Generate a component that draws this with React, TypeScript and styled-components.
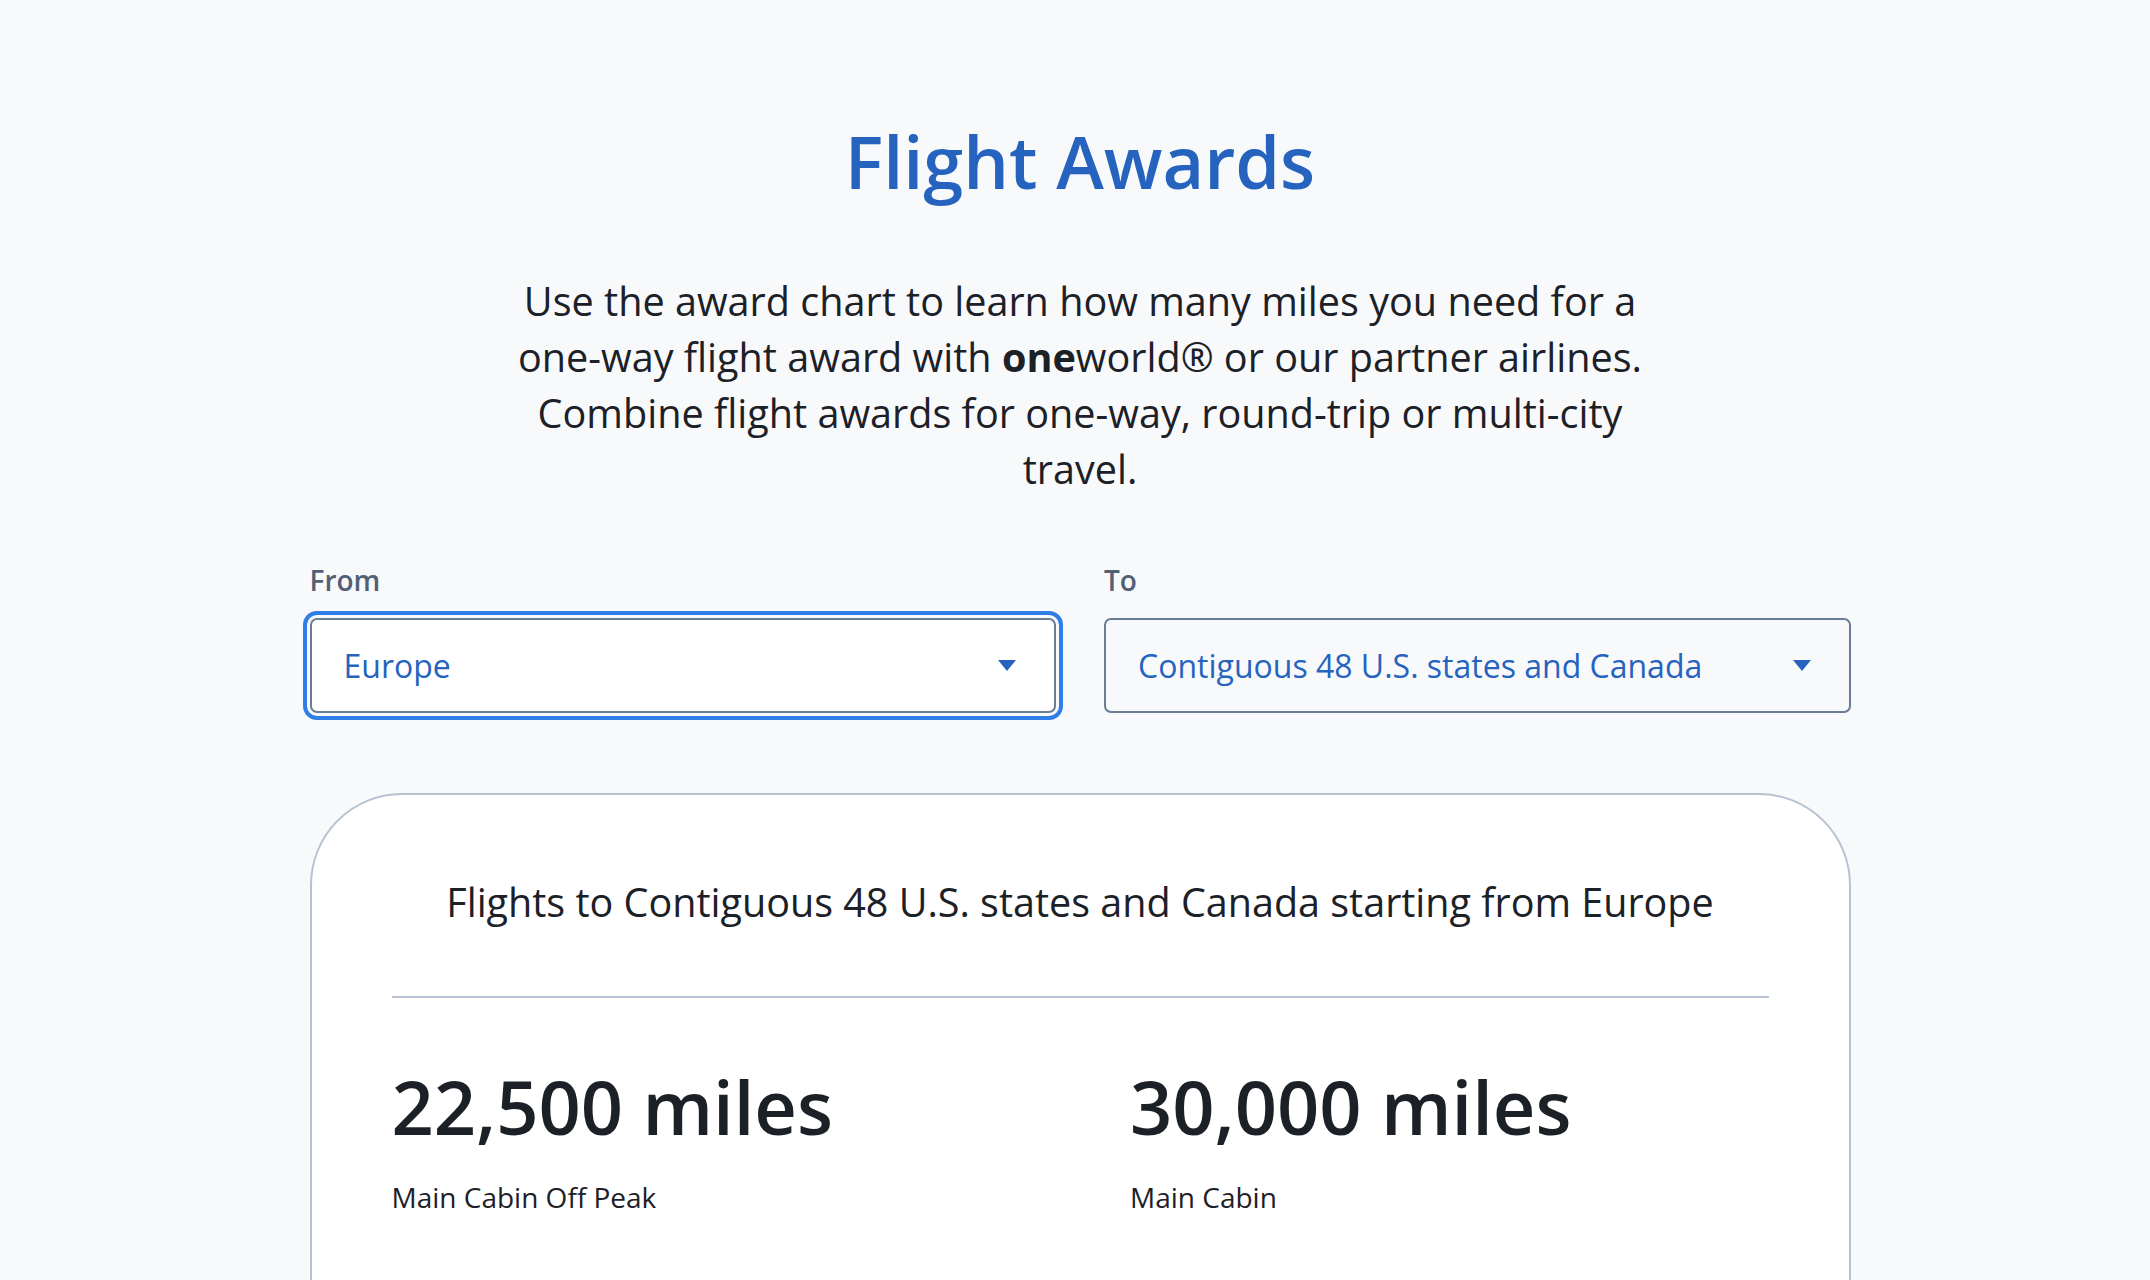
import React from 'react'
import styled, { createGlobalStyle } from 'styled-components'

const BLUE = '#2563be'
const INK = '#1c2027'
const SLATE = '#6a7c96'
const LINE = '#b6c2d1'

const GlobalStyle = createGlobalStyle`
  html, body {
    margin: 0;
    padding: 0;
    background: #f8f9fb;
  }
  body {
    font-family: 'Open Sans', 'Noto Sans', sans-serif;
    color: ${INK};
  }
  * {
    box-sizing: border-box;
  }
`

const Page = styled.main`
  box-sizing: content-box;
  width: 1541px;
  margin: 0 auto;
  padding: 115px 0 0 10px;
  display: flex;
  flex-direction: column;
  align-items: center;
`

const Title = styled.h1`
  margin: 0;
  font-size: 72px;
  line-height: 92px;
  font-weight: 600;
  color: ${BLUE};
`

const Intro = styled.p`
  max-width: 1180px;
  margin: 66px 0 0;
  font-size: 39.6px;
  line-height: 56px;
  text-align: center;
  b {
    font-weight: 700;
  }
`

const Fields = styled.div`
  width: 100%;
  margin-top: 63px;
  display: grid;
  grid-template-columns: 1fr 1fr;
  column-gap: 48px;
`

const Field = styled.div`
  display: flex;
  flex-direction: column;
`

const Label = styled.label`
  font-size: 28px;
  line-height: 40px;
  font-weight: 600;
  color: #516076;
  margin-bottom: 18px;
`

const SelectBox = styled.div<{ $focused?: boolean }>`
  height: 95px;
  display: flex;
  align-items: center;
  justify-content: space-between;
  padding: 0 38px 0 32px;
  border: 2px solid ${SLATE};
  border-radius: 7px;
  background: ${({ $focused }) => ($focused ? '#fff' : 'transparent')};
  outline: ${({ $focused }) => ($focused ? '4px solid #2f7de6' : 'none')};
  outline-offset: 3px;
  color: ${BLUE};
  font-size: 32px;
`

const Caret = styled.svg`
  width: 18px;
  height: 11px;
  flex: none;
`

const Card = styled.section`
  width: 100%;
  margin-top: 80px;
  padding: 0 80px 240px;
  background: #fff;
  border: 2px solid ${LINE};
  border-radius: 92px;
`

const CardTitle = styled.h2`
  margin: 0;
  padding: 79px 0 66px;
  font-size: 39.5px;
  line-height: 56px;
  font-weight: 400;
  text-align: center;
  border-bottom: 2px solid ${LINE};
`

const Prices = styled.div`
  display: grid;
  grid-template-columns: 1fr 1fr;
  column-gap: 100px;
  padding-top: 61px;
`

const Price = styled.div`
  display: flex;
  flex-direction: column;
`

const Miles = styled.div`
  font-size: 74px;
  line-height: 96px;
  font-weight: 600;
  color: ${INK};
`

const Cabin = styled.div`
  margin-top: 22px;
  font-size: 28px;
  line-height: 40px;
`

function Select({ value, focused }: { value: string; focused?: boolean }) {
  return (
    <SelectBox $focused={focused}>
      <span>{value}</span>
      <Caret viewBox="0 0 18 11">
        <path d="M0 0h18L9 11z" fill={BLUE} />
      </Caret>
    </SelectBox>
  )
}

const prices = [
  { miles: '22,500 miles', cabin: 'Main Cabin Off Peak' },
  { miles: '30,000 miles', cabin: 'Main Cabin' },
]

export default function App() {
  return (
    <>
      <GlobalStyle />
      <Page>
        <Title>Flight Awards</Title>
        <Intro>
          Use the award chart to learn how many miles you need for a one-way
          flight award with <b>one</b>world® or our partner airlines. Combine
          flight awards for one-way, round-trip or multi-city travel.
        </Intro>
        <Fields>
          <Field>
            <Label>From</Label>
            <Select value="Europe" focused />
          </Field>
          <Field>
            <Label>To</Label>
            <Select value="Contiguous 48 U.S. states and Canada" />
          </Field>
        </Fields>
        <Card>
          <CardTitle>
            Flights to Contiguous 48 U.S. states and Canada starting from Europe
          </CardTitle>
          <Prices>
            {prices.map((p) => (
              <Price key={p.cabin}>
                <Miles>{p.miles}</Miles>
                <Cabin>{p.cabin}</Cabin>
              </Price>
            ))}
          </Prices>
        </Card>
      </Page>
    </>
  )
}
